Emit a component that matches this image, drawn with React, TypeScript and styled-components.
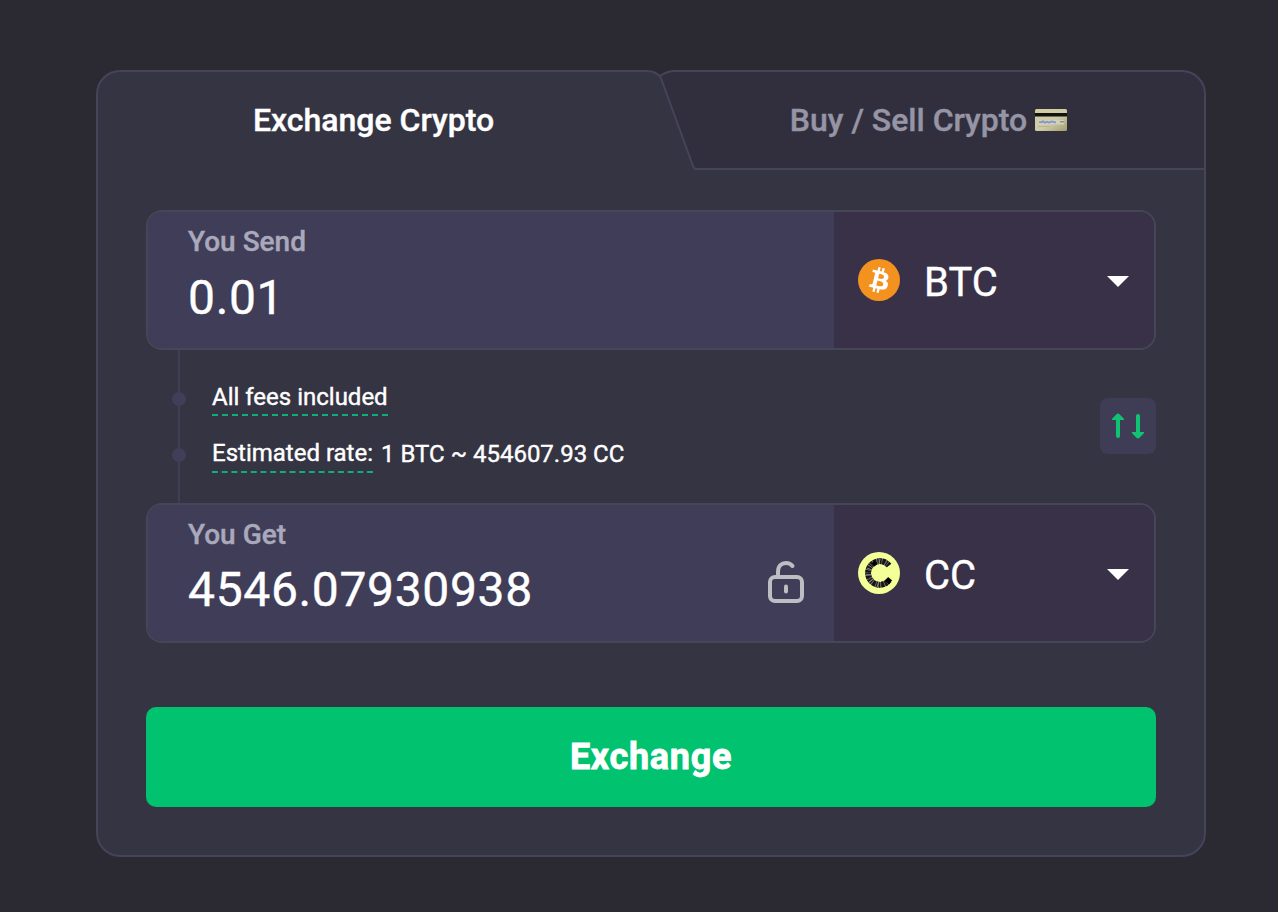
import React from 'react';
import styled, { createGlobalStyle } from 'styled-components';


const App = () => {
    return (
    <>
        <GlobalStyle />
        <Page>
          <Widget>
            <Tabs>
              <ActiveTab>Exchange Crypto</ActiveTab>
              <TabDivider />
              <Tab>
                Buy / Sell Crypto
                <CreditCard />
              </Tab>
            </Tabs>
            <Body>
              <Field>
                <Amount>
                  <div>
                    <Label>You Send</Label>
                    <Value>0.01</Value>
                  </div>
                </Amount>
                <Currency>
                  <BtcLogo />
                  <Ticker>BTC</Ticker>
                  <Caret />
                </Currency>
              </Field>
              <Middle>
                <Timeline>
                  <Dot />
                  <Dot />
                </Timeline>
                <Details>
                  <Detail>
                    <Hint>All fees included</Hint>
                  </Detail>
                  <Detail>
                    <Hint $low>Estimated rate:</Hint>
                    <Rate>1 BTC ~ 454607.93 CC</Rate>
                  </Detail>
                </Details>
                <SwapButton aria-label="Swap">
                  <SwapIcon />
                </SwapButton>
              </Middle>
              <Field>
                <Amount>
                  <div>
                    <Label>You Get</Label>
                    <Value $up>4546.07930938</Value>
                  </div>
                  <LockIcon />
                </Amount>
                <Currency>
                  <CcLogo />
                  <Ticker>CC</Ticker>
                  <Caret />
                </Currency>
              </Field>
              <Button>Exchange</Button>
            </Body>
          </Widget>
        </Page>
    </>
    )
};

export default App;


const TabDivider = () => (
  <DividerSvg width="50" height="100" viewBox="0 0 50 100">
    <path d="M0 1H1C7 1 12 4 14 8L47 96Q48 99 50 99V100H0Z" fill="#353442" />
    <path d="M14 8C18 3 23 1 29 1H50V99Q48 99 47 96Z" fill="#312f3e" />
    <path
      d="M0 1H1C7 1 12 4 14.500 7L47 96Q48 99 50 99M14 6C18 3 23 1 29 1H50"
      fill="none"
      stroke="#454459"
      strokeWidth="2"
    />
  </DividerSvg>
);

const CreditCard = () => (
  <svg width="32" height="22" viewBox="0 0 32 22">
    <defs>
      <linearGradient id="card" x1="0" y1="0" x2="1" y2="1">
        <stop offset="0" stopColor="#d2cda0" />
        <stop offset="0.55" stopColor="#cfcba8" />
        <stop offset="1" stopColor="#a39d70" />
      </linearGradient>
    </defs>
    <rect width="32" height="22" rx="1.500" fill="url(#card)" />
    <rect y="4" width="32" height="3.500" fill="#12120e" />
    <rect x="3" y="11" width="26" height="4.500" fill="#d0d0c0" />
    <path d="M4 13.200h3l1-1 2 1.500 2-1 2 .8 3-1 3 .8h1" stroke="#8595c4" strokeWidth="1.800" fill="none" />
    <path d="M25 12.800h4" stroke="#8a8570" strokeWidth="1.300" />
    <path d="M3 17.500h12" stroke="#b9b48c" strokeWidth="1" />
  </svg>
);

const BtcLogo = () => (
  <svg width="42" height="42" viewBox="0 0 32 32">
    <circle cx="16" cy="16" r="16" fill="#f49220" />
    <path
      fill="#fff"
      d="M23.189 14.02c.314-2.096-1.283-3.223-3.465-3.975l.708-2.84-1.728-.43-.69 2.765c-.454-.114-.92-.22-1.385-.326l.695-2.783L15.596 6l-.708 2.839c-.376-.086-.746-.17-1.104-.26l.002-.009-2.384-.595-.46 1.846s1.283.294 1.256.312c.7.175.826.638.805 1.006l-.806 3.235c.048.012.11.03.18.057l-.183-.045-1.13 4.532c-.086.212-.303.531-.793.41.018.025-1.256-.313-1.256-.313l-.858 1.978 2.25.561c.418.105.828.215 1.231.318l-.715 2.872 1.727.43.708-2.84c.472.127.93.245 1.378.357l-.706 2.828 1.728.43.715-2.866c2.948.558 5.164.333 6.097-2.333.752-2.146-.037-3.385-1.588-4.192 1.13-.26 1.98-1.003 2.207-2.538zm-3.95 5.538c-.533 2.147-4.148.986-5.32.695l.95-3.805c1.172.293 4.929.872 4.37 3.11zm.535-5.569c-.487 1.953-3.495.96-4.47.717l.86-3.45c.975.243 4.118.696 3.61 2.733z"
    />
  </svg>
);

const CcLogo = () => (
  <svg width="42" height="42" viewBox="0 0 42 42">
    <circle cx="21" cy="21" r="21" fill="#f3ff97" />
    <g fill="none">
      <path d="M31 13.500A11.800 11.800 0 1 0 31 28.500" stroke="#77776c" strokeWidth="5.800" />
      <path
        d="M31 13.500A11.800 11.800 0 1 0 31 28.500"
        stroke="#151514"
        strokeWidth="5.800"
        strokeDasharray="2.200 0.600 1.200 0.900 3 0.800"
      />
      <path d="M22 7l-1 5M15 10l3 4M9 16l5 2M8 23l5 0M11 30l5-4M19 35l2-6" stroke="#aaab9c" strokeWidth=".8" />
      <path d="M28.500 26.800l4 3.500" stroke="#000" strokeWidth="5" />
      <path d="M15 10l3 3" stroke="#000" strokeWidth="4" />
    </g>
  </svg>
);

const Caret = () => (
  <CaretSvg width="22" height="11" viewBox="0 0 22 11">
    <path d="M0 0h22L11 11z" fill="#fff" />
  </CaretSvg>
);

const LockIcon = () => (
  <LockSvg width="36" height="42" viewBox="0 0 36 42" fill="none" stroke="#bebdc3" strokeWidth="4">
    <rect x="2" y="16" width="32" height="24" rx="5" />
    <path d="M10 16V11C10 5 13.500 2 18 2C21 2 23 3 24.500 5" strokeLinecap="round" />
    <path d="M18 25.500V30.500" strokeLinecap="round" />
  </LockSvg>
);

const SwapIcon = () => (
  <svg width="34" height="26" viewBox="0 0 34 26" fill="#0fc373">
    <path d="M7 .5q.8 0 1.500.7l4.400 4.600q.8 1.200-.6 1.200H9v16a2 2 0 0 1-4 0V7H1.700Q.3 7 1.100 5.800L5.500 1.200Q6.200.5 7 .5z" />
    <path d="M27 25.500q-.8 0-1.500-.7l-4.400-4.600q-.8-1.200.6-1.200H25V3a2 2 0 0 1 4 0v16h3.300q1.400 0 .6 1.200l-4.400 4.600q-.7.7-1.500.7z" />
  </svg>
);

const GlobalStyle = createGlobalStyle`
  * {
    box-sizing: border-box;
  }
  body {
    margin: 0;
    background-color: #2b2a33;
    font-family: Roboto, "Liberation Sans", sans-serif;
    -webkit-text-stroke-width: 0.4px;
  }
`;

const Page = styled.div`
  height: 912px;
  padding: 70px 72px 55px 96px;
`;

const Widget = styled.div`
  display: flex;
  flex-direction: column;
  height: 787px;
`;

const Tabs = styled.div`
  display: flex;
  height: 100px;
`;

const BaseTab = styled.div`
  display: flex;
  align-items: center;
  justify-content: center;
  font-size: 32px;
  font-weight: 500;
  border: 0 solid #454459;
`;

const ActiveTab = styled(BaseTab)`
  width: 550px;
  padding: 0 0 2px 3px;
  color: white;
  background-color: #353442;
  border-width: 2px 0 0 2px;
  border-radius: 24px 0 0 0;
`;

const Tab = styled(BaseTab)`
  flex: 1;
  gap: 8px;
  padding: 0 43px 1px 0;
  color: #9695a5;
  background-color: #312f3e;
  border-width: 2px 2px 2px 0;
  border-radius: 0 24px 0 0;
`;

const DividerSvg = styled.svg`
  flex-shrink: 0;
`;

const Body = styled.div`
  flex: 1;
  padding: 40px 48px 48px;
  background-color: #353442;
  border: 2px solid #454459;
  border-top: 0;
  border-radius: 0 0 24px 24px;
`;

const Field = styled.div`
  display: flex;
  height: 140px;
  border: 2px solid #474658;
  border-radius: 16px;
  overflow: hidden;
`;

const Amount = styled.div`
  display: flex;
  justify-content: space-between;
  width: 686px;
  padding: 14px 30px 0 40px;
  background-color: #3f3d58;
`;

const Label = styled.div`
  line-height: 32px;
  font-size: 28px;
  font-weight: 500;
  color: #aaa9bb;
`;

const Value = styled.div<{ $up?: boolean }>`
  margin-top: ${({ $up }) => ($up ? '11px' : '12px')};
  line-height: 56px;
  font-size: 48px;
  letter-spacing: 0.65px;
  color: white;
`;

const LockSvg = styled.svg`
  margin-top: 42px;
`;

const Currency = styled.div`
  display: flex;
  flex: 1;
  align-items: center;
  padding: 0 25px 0 24px;
  background-color: #383148;
`;

const Ticker = styled.div`
  flex: 1;
  margin: 5px 0 0 24px;
  font-size: 40px;
  color: white;
`;

const CaretSvg = styled.svg`
  margin-top: 3px;
`;

const Middle = styled.div`
  display: flex;
  height: 153px;
  padding-left: 25px;
`;

const Timeline = styled.div`
  display: flex;
  flex-direction: column;
  gap: 42px;
  width: 16px;
  padding: 42px 1px 0;
  background: linear-gradient(#403e56, #403e56) center / 2px 100% no-repeat;
`;

const Dot = styled.div`
  height: 14px;
  border-radius: 50%;
  background-color: #403e58;
`;

const Details = styled.div`
  display: flex;
  flex: 1;
  flex-direction: column;
  padding: 32px 0 0 25px;
`;

const Detail = styled.div`
  display: flex;
  align-items: flex-start;
  gap: 8px;
  height: 56px;
  font-size: 24px;
  line-height: 30px;
  color: white;
`;

const Hint = styled.span<{ $low?: boolean }>`
  padding-bottom: ${({ $low }) => ($low ? '3px' : '2px')};
  border-bottom: 2px dashed #0fae7b;
`;

const Rate = styled.span`
  padding-top: 1px;
`;

const SwapButton = styled.button`
  display: flex;
  align-items: center;
  justify-content: center;
  width: 56px;
  height: 56px;
  margin-top: 48px;
  padding: 0;
  background-color: #3f3d56;
  border: 0;
  border-radius: 8px;
  cursor: pointer;
`;

const Button = styled.button`
  width: 100%;
  height: 100px;
  margin-top: 64px;
  background-color: #00c26f;
  color: white;
  font-family: inherit;
  font-size: 36px;
  font-weight: 700;
  letter-spacing: 0.7px;
  -webkit-text-stroke-width: 0.8px;
  border: 0;
  border-radius: 10px;
  cursor: pointer;
`;
